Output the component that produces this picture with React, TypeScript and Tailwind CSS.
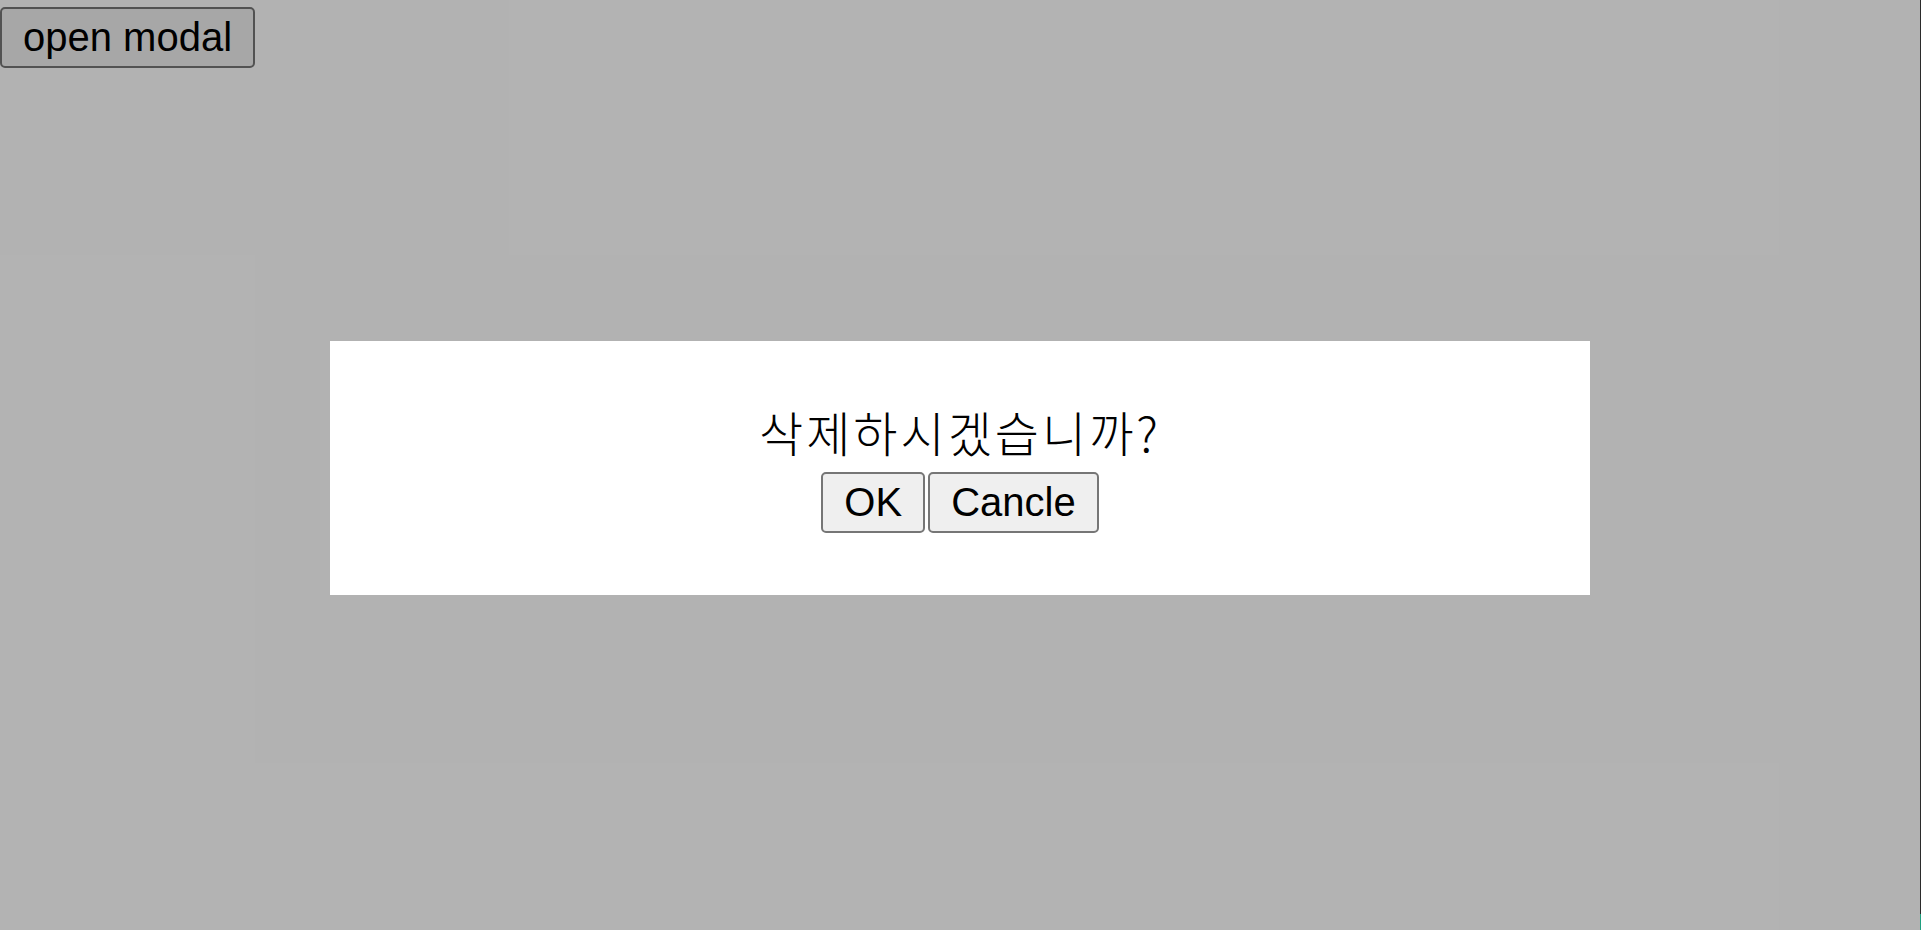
import React, { useState } from 'react';

const btn =
    "bg-[#efefef] border-2 border-[#767676] rounded-[5px] px-[21px] py-[5px] text-[40px] leading-[47px] text-black font-['Liberation_Sans',Arial,sans-serif]";

export default function App() {
    const [open, setOpen] = useState(true);

    return (
        <div className="flex h-[930px] w-full overflow-hidden">
            <div className="relative flex-1 bg-white">
                <button onClick={() => setOpen(true)} className={`${btn} mt-[7px] block`}>
                    open modal
                </button>

                {open && (
                    <div className="absolute inset-0 flex items-center justify-center bg-black/30 pt-[6px]">
                        <div className="flex h-[254px] w-[1260px] flex-col items-center bg-white pt-[60px]">
                            <p className="text-[48px] leading-[60px] tracking-[3px] font-light text-black font-['Noto_Sans_CJK_KR','Noto_Sans',sans-serif]">
                                삭제하시겠습니까?
                            </p>
                            <div className="mt-[11px] flex gap-[3px]">
                                <button onClick={() => setOpen(false)} className={btn}>
                                    OK
                                </button>
                                <button onClick={() => setOpen(false)} className={btn}>
                                    Cancle
                                </button>
                            </div>
                        </div>
                    </div>
                )}
            </div>
            <div className="flex w-px flex-col bg-[#2b2b2b]">
                <div className="flex-1" />
                <div className="h-[16px] bg-[#1f9f7f]" />
            </div>
        </div>
    );
}
